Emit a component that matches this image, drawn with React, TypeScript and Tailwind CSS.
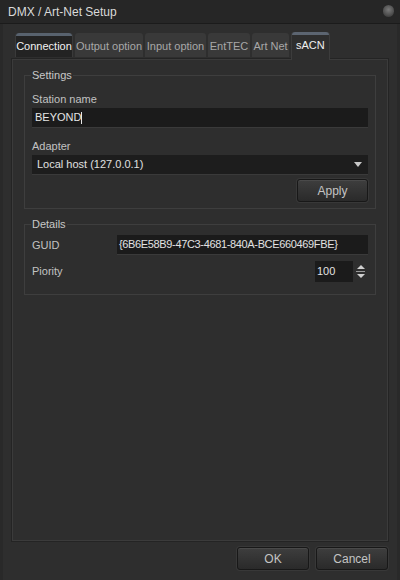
import React from "react";

function Btn({ label, w }: { label: string; w: string }) {
  return (
    <div
      className={`${w} h-[23px] flex items-center justify-center rounded-[3px] border border-[#181818] bg-gradient-to-b from-[#3e3e3e] to-[#2a2a2a] shadow-[inset_0_1px_0_#4a4a4a,0_0_0_1px_#383838] text-[#c4c4c4] text-[12px]`}
    >
      {label}
    </div>
  );
}

function Tab({ label, w, state }: { label: string; w: string; state: "hover" | "sel" | "norm" }) {
  if (state === "sel") {
    return (
      <div className={`${w} h-[28px] relative z-10 flex flex-col bg-[#2e2e2e] border-x border-[#3c3c3c] rounded-t-[3px]`}>
        <div className="h-[3px] bg-[#5c6571] rounded-t-[3px]" />
        <div className="flex-1 flex items-start pt-[2px] pl-[4px] text-[#f0f0f0] text-[11px]">{label}</div>
      </div>
    );
  }
  if (state === "hover") {
    return (
      <div className={`${w} h-[24px] mb-[3px] flex flex-col bg-[#232323] border-x border-[#3a3a3a] rounded-t-[3px]`}>
        <div className="h-[3px] bg-[#58626e] rounded-t-[3px]" />
        <div className="flex-1 flex items-center justify-center text-[#f2f2f2] text-[11px] pb-[1px]">{label}</div>
      </div>
    );
  }
  return (
    <div className={`${w} h-[24px] mb-[3px] flex items-center justify-center bg-[#393939] rounded-t-[3px] text-[#a8a8a8] text-[11px] pt-[2px]`}>
      {label}
    </div>
  );
}

export default function App() {
  return (
    <div className="w-[400px] h-[580px] bg-[#2e2e2e] flex flex-col overflow-hidden font-['Liberation_Sans',Arial,sans-serif] text-[11px] text-[#c2c2c2]">
      {/* title bar */}
      <div className="h-[24px] shrink-0 bg-[#262626] border-b border-[#1b1b1b] flex items-center justify-between pl-[8px] pr-[6px]">
        <span className="text-[12px] text-[#dadada]">DMX / Art-Net Setup</span>
        <div className="w-[11px] h-[12px] rounded-full bg-[radial-gradient(circle_at_50%_40%,#7a7a7a,#4a4a4a_65%,#2c2c2c)] mb-[2px] blur-[0.4px]" />
      </div>

      {/* body */}
      <div className="flex-1 flex flex-col px-[9px] pt-[8px] border-x-[3px] border-[#292929]">
        {/* tabs */}
        <div className="flex items-end gap-[2px] pl-[3px] -mb-[1px] h-[28px]">
          <Tab label="Connection" w="w-[58px]" state="hover" />
          <Tab label="Output option" w="w-[68px]" state="norm" />
          <Tab label="Input option" w="w-[61px]" state="norm" />
          <Tab label="EntTEC" w="w-[42px]" state="norm" />
          <Tab label="Art Net" w="w-[37px]" state="norm" />
          <Tab label="sACN" w="w-[39px]" state="sel" />
        </div>

        {/* panel */}
        <div className="h-[482px] border border-[#3b3b3b] shadow-[0_0_0_1px_#242424] flex flex-col pl-[11px] pr-[11px] pt-[9px]">
          <fieldset className="border border-[#3e3e3e] px-[7px] pb-[6px]">
            <legend className="-ml-[1px] px-[1px] text-[#c8c8c8] leading-[13px]">Settings</legend>
            <div className="pt-[11px] leading-[13px]">Station name</div>
            <div className="mt-[2px] h-[20px] bg-[#1b1b1b] border-b border-[#3a3a3a] flex items-center pl-[3px] text-[#e6e6e6]">
              BEYOND<span className="inline-block w-px h-[12px] bg-[#e6e6e6]" />
            </div>
            <div className="mt-[12px] leading-[13px]">Adapter</div>
            <div className="mt-[2px] h-[20px] bg-[#1d1d1d] border-b border-[#3a3a3a] flex items-center justify-between pl-[5px] pr-[6px] text-[#e0e0e0]">
              <span>Local host (127.0.0.1)</span>
              <svg width="8" height="5" viewBox="0 0 8 5">
                <path d="M0 0 H8 L4 5 Z" fill="#c8c8c8" />
              </svg>
            </div>
            <div className="mt-[4px] flex justify-end">
              <Btn label="Apply" w="w-[71px]" />
            </div>
          </fieldset>

          <fieldset className="mt-[9px] border border-[#3e3e3e] px-[7px] pb-[12px]">
            <legend className="-ml-[1px] px-[1px] text-[#c8c8c8] leading-[13px]">Details</legend>
            <div className="pt-[4px] flex items-center h-[24px]">
              <span className="w-[85px]">GUID</span>
              <div className="flex-1 h-[20px] bg-[#1b1b1b] border-b border-[#3a3a3a] flex items-center pl-[2px] text-[#e2e2e2] tracking-[-0.35px]">
                {"{6B6E58B9-47C3-4681-840A-BCE660469FBE}"}
              </div>
            </div>
            <div className="mt-[6px] flex items-center h-[21px]">
              <span>Piority</span>
              <div className="ml-auto flex h-[21px]">
                <div className="w-[38px] bg-[#1b1b1b] flex items-center pl-[2px] text-[#e2e2e2]">100</div>
                <div className="w-[15px] flex flex-col items-center justify-center gap-[2px]">
                  <svg width="8" height="4" viewBox="0 0 8 4">
                    <path d="M0 4 H8 L4 0 Z" fill="#d0d0d0" />
                  </svg>
                  <div className="w-[9px] h-px bg-[#9a9a9a]" />
                  <svg width="8" height="4" viewBox="0 0 8 4">
                    <path d="M0 0 H8 L4 4 Z" fill="#d0d0d0" />
                  </svg>
                </div>
              </div>
            </div>
          </fieldset>
        </div>

        {/* buttons */}
        <div className="flex justify-end gap-[7px] pt-[6px]">
          <Btn label="OK" w="w-[72px]" />
          <Btn label="Cancel" w="w-[72px]" />
        </div>
      </div>
    </div>
  );
}
